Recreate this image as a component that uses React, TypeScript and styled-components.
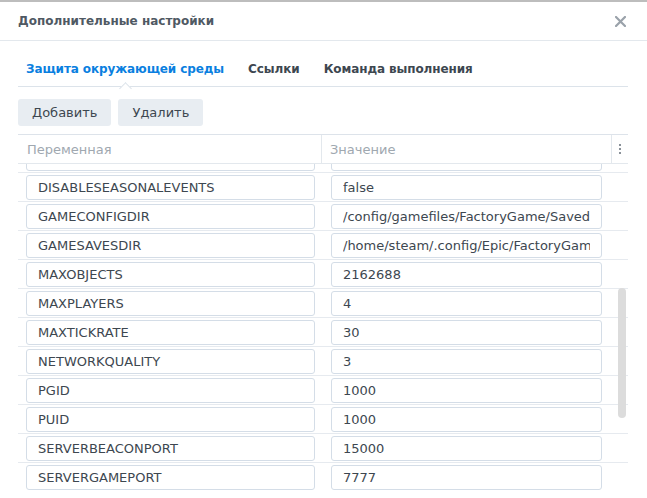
import React, { useLayoutEffect, useRef } from 'react'
import styled, { createGlobalStyle } from 'styled-components'

const GlobalStyle = createGlobalStyle`
  html, body {
    margin: 0;
    padding: 0;
    background: #ffffff;
    overflow: hidden;
  }
  body {
    font-family: 'DejaVu Sans', Verdana, sans-serif;
    font-size: 13px;
    color: #414b55;
  }
`

const Dialog = styled.div`
  width: 647px;
  height: 498px;
  box-sizing: border-box;
  border-top: 2px solid #bdbdbd;
  display: flex;
  flex-direction: column;
`

const Header = styled.div`
  height: 38px;
  flex-shrink: 0;
  display: flex;
  align-items: center;
  justify-content: space-between;
  padding: 0 20px 0 18px;
  border-bottom: 1px solid #e3e8ed;
`

const Title = styled.div`
  font-weight: bold;
  font-size: 12px;
  color: #4f5963;
`

const CloseButton = styled.button`
  width: 14px;
  height: 14px;
  padding: 0;
  border: none;
  background: transparent;
  display: flex;
  align-items: center;
  justify-content: center;
`

const Content = styled.div`
  flex: 1;
  min-height: 0;
  padding: 0 19px 0 18px;
  display: flex;
  flex-direction: column;
`

const TabList = styled.div`
  position: relative;
  height: 46px;
  flex-shrink: 0;
  box-sizing: border-box;
  padding: 20px 0 0 8px;
  display: flex;
  gap: 24px;
  border-bottom: 1px solid #dce3ea;
`

const Tab = styled.div<{ $active?: boolean }>`
  position: relative;
  font-weight: bold;
  font-size: 12px;
  line-height: 16px;
  letter-spacing: -0.1px;
  color: ${(p) => (p.$active ? '#0a7fe0' : '#3d4750')};
`

const Caret = styled.span`
  position: absolute;
  left: 50%;
  top: 23px;
  width: 8px;
  height: 8px;
  margin-left: -4px;
  background: #ffffff;
  border-top: 1px solid #dce3ea;
  border-left: 1px solid #dce3ea;
  transform: rotate(45deg);
`

const Toolbar = styled.div`
  display: flex;
  gap: 7px;
  margin-top: 12px;
  flex-shrink: 0;
`

const ToolButton = styled.button`
  height: 27px;
  padding: 0 14px;
  border: none;
  border-radius: 3px;
  background: #e8edf2;
  color: #3d4750;
  font-family: inherit;
  font-size: 13px;
`

const Table = styled.div`
  position: relative;
  margin-top: 8px;
  flex: 1;
  min-height: 0;
  display: flex;
  flex-direction: column;
  border-top: 1px solid #dde3ea;
`

const HeadRow = styled.div`
  display: grid;
  grid-template-columns: 304px 290px 16px;
  height: 28px;
  flex-shrink: 0;
  border-bottom: 1px solid #e3e8ed;
`

const HeadCell = styled.div<{ $first?: boolean }>`
  display: flex;
  align-items: center;
  padding-left: ${(p) => (p.$first ? '9px' : '8px')};
  color: #a0a8b0;
  font-size: 13px;
  border-right: 1px solid #e3e8ed;
`

const MenuCell = styled.div`
  display: flex;
  align-items: center;
  justify-content: center;
`

const Dots = styled.span`
  display: flex;
  flex-direction: column;
  gap: 2px;
  span {
    width: 2px;
    height: 2px;
    background: #8a9199;
  }
`

const Body = styled.div`
  flex: 1;
  min-height: 0;
  overflow-y: scroll;
  padding-bottom: 14px;
  scrollbar-width: none;
  &::-webkit-scrollbar {
    display: none;
  }
`

const Row = styled.div`
  display: grid;
  grid-template-columns: 304px 290px 16px;
  height: 29px;
  box-sizing: border-box;
  padding: 2px 0 1px;
  border-bottom: 1px solid #e6eaef;

  &:last-child {
    border-bottom: none;
  }
`

const Field = styled.input<{ $side: 'left' | 'right' }>`
  height: 25px;
  min-width: 0;
  box-sizing: border-box;
  margin: ${(p) => (p.$side === 'left' ? '0 7px 0 8px' : '0 10px 0 9px')};
  padding: 0 11px;
  border: 1px solid #d4dde7;
  border-radius: 3px;
  outline: none;
  background: #ffffff;
  color: #3d4750;
  font-family: 'DejaVu Sans', Verdana, sans-serif;
  font-size: 13px;
`

const ScrollThumb = styled.div`
  position: absolute;
  right: 2px;
  top: 153px;
  width: 8px;
  height: 130px;
  border-radius: 4px;
  background: #dcdcdc;
`

const rows: [string, string][] = [
  ['', ''],
  ['DISABLESEASONALEVENTS', 'false'],
  ['GAMECONFIGDIR', '/config/gamefiles/FactoryGame/Saved'],
  ['GAMESAVESDIR', '/home/steam/.config/Epic/FactoryGame/Saved/SaveGames'],
  ['MAXOBJECTS', '2162688'],
  ['MAXPLAYERS', '4'],
  ['MAXTICKRATE', '30'],
  ['NETWORKQUALITY', '3'],
  ['PGID', '1000'],
  ['PUID', '1000'],
  ['SERVERBEACONPORT', '15000'],
  ['SERVERGAMEPORT', '7777']
]

const App = (): JSX.Element => {
  const bodyRef = useRef<HTMLDivElement>(null)

  useLayoutEffect(() => {
    if (bodyRef.current) bodyRef.current.scrollTop = 20
  }, [])

  return (
    <>
      <GlobalStyle />
      <Dialog>
        <Header>
          <Title>Дополнительные настройки</Title>
          <CloseButton aria-label="Закрыть">
            <svg width="11" height="11" viewBox="0 0 11 11">
              <path
                d="M1 1 L10 10 M10 1 L1 10"
                stroke="#9aa2aa"
                strokeWidth="2.2"
                strokeLinecap="square"
              />
            </svg>
          </CloseButton>
        </Header>
        <Content>
          <TabList>
            <Tab $active>
              Защита окружающей среды
              <Caret />
            </Tab>
            <Tab>Ссылки</Tab>
            <Tab>Команда выполнения</Tab>
          </TabList>
          <Toolbar>
            <ToolButton>Добавить</ToolButton>
            <ToolButton>Удалить</ToolButton>
          </Toolbar>
          <Table>
            <HeadRow>
              <HeadCell $first>Переменная</HeadCell>
              <HeadCell>Значение</HeadCell>
              <MenuCell>
                <Dots>
                  <span />
                  <span />
                  <span />
                </Dots>
              </MenuCell>
            </HeadRow>
            <Body ref={bodyRef}>
              {rows.map(([name, value], i) => (
                <Row key={i}>
                  <Field $side="left" readOnly value={name} />
                  <Field $side="right" readOnly value={value} />
                </Row>
              ))}
            </Body>
            <ScrollThumb />
          </Table>
        </Content>
      </Dialog>
    </>
  )
}

export default App
